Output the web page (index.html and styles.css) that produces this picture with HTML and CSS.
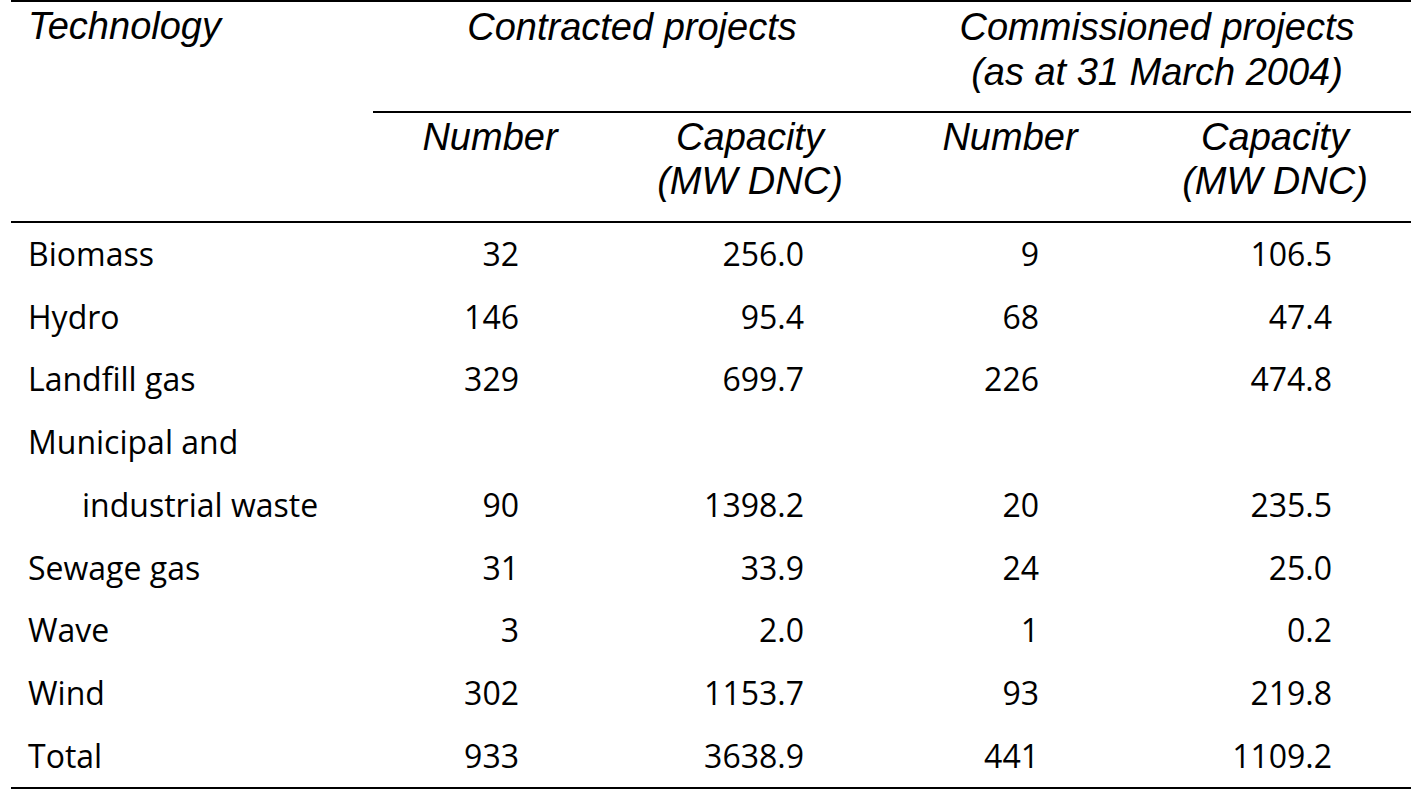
FILE: index.html
```html
<!DOCTYPE html>
<html>
<head>
<meta charset="utf-8">
<link rel="stylesheet" href="styles.css">
</head>
<body>
<table class="data">
  <colgroup>
    <col class="w-tech"><col class="w-col"><col class="w-col"><col class="w-col"><col class="w-last">
  </colgroup>
  <thead>
    <tr>
      <th class="tech" rowspan="2">Technology</th>
      <th class="group contracted" colspan="2">Contracted projects</th>
      <th class="group commissioned" colspan="2">Commissioned projects<br>(as at 31 March 2004)</th>
    </tr>
    <tr>
      <th class="sub h-num-c">Number</th>
      <th class="sub h-cap-c">Capacity<br>(MW DNC)</th>
      <th class="sub h-num-m">Number</th>
      <th class="sub h-cap-m">Capacity<br>(MW DNC)</th>
    </tr>
  </thead>
  <tbody>
    <tr><td class="label">Biomass</td><td class="num-c">32</td><td class="cap-c">256.0</td><td class="num-m">9</td><td class="cap-m">106.5</td></tr>
    <tr><td class="label">Hydro</td><td class="num-c">146</td><td class="cap-c">95.4</td><td class="num-m">68</td><td class="cap-m">47.4</td></tr>
    <tr><td class="label">Landfill gas</td><td class="num-c">329</td><td class="cap-c">699.7</td><td class="num-m">226</td><td class="cap-m">474.8</td></tr>
    <tr><td class="label">Municipal and</td><td class="num-c"></td><td class="cap-c"></td><td class="num-m"></td><td class="cap-m"></td></tr>
    <tr><td class="label indent">industrial waste</td><td class="num-c">90</td><td class="cap-c">1398.2</td><td class="num-m">20</td><td class="cap-m">235.5</td></tr>
    <tr><td class="label">Sewage gas</td><td class="num-c">31</td><td class="cap-c">33.9</td><td class="num-m">24</td><td class="cap-m">25.0</td></tr>
    <tr><td class="label">Wave</td><td class="num-c">3</td><td class="cap-c">2.0</td><td class="num-m">1</td><td class="cap-m">0.2</td></tr>
    <tr><td class="label">Wind</td><td class="num-c">302</td><td class="cap-c">1153.7</td><td class="num-m">93</td><td class="cap-m">219.8</td></tr>
    <tr class="last"><td class="label">Total</td><td class="num-c">933</td><td class="cap-c">3638.9</td><td class="num-m">441</td><td class="cap-m">1109.2</td></tr>
  </tbody>
</table>
</body>
</html>
```

FILE: styles.css
```css
html, body {
  margin: 0;
  padding: 0;
  background: #ffffff;
  color: #000000;
}

.data {
  margin-left: 11px;
  width: 1400px;
  table-layout: fixed;
  border-collapse: separate;
  border-spacing: 0;
}

.w-tech { width: 362px; }
.w-col { width: 259px; }
.w-last { width: 261px; }

.data th {
  font-family: "Liberation Sans", Arial, sans-serif;
  font-style: italic;
  font-weight: normal;
  font-size: 38px;
  line-height: 45px;
  vertical-align: top;
  padding: 0;
}

.tech {
  text-align: left;
  padding-left: 17px !important;
  padding-top: 2px !important;
  border-top: 2px solid #000;
  border-bottom: 2px solid #000;
}

.group {
  text-align: center;
  border-top: 2px solid #000;
  border-bottom: 2px solid #000;
  padding-top: 3px !important;
  padding-bottom: 16px !important;
}

.commissioned {
  padding-left: 12px !important;
}

.sub {
  text-align: center;
  line-height: 44px !important;
  padding-top: 2px !important;
  padding-bottom: 18px !important;
  border-bottom: 2px solid #000;
}

.h-num-c { padding-right: 25px !important; }
.h-cap-c { padding-right: 23px !important; }
.h-num-m { padding-right: 21px !important; }
.h-cap-m { padding-right: 11px !important; }

.data td {
  font-family: "Open Sans", "Noto Sans", sans-serif;
  font-size: 32px;
  line-height: 62.7px;
  padding: 0;
  text-align: right;
  white-space: nowrap;
}

.data td.label {
  text-align: left;
  padding-left: 17px;
}

.data td.indent {
  padding-left: 71px;
}

.num-c { padding-right: 113px !important; }
.cap-c { padding-right: 87px !important; }
.num-m { padding-right: 111px !important; }
.cap-m { padding-right: 79px !important; }

.last td {
  border-bottom: 2px solid #000;
}
```
